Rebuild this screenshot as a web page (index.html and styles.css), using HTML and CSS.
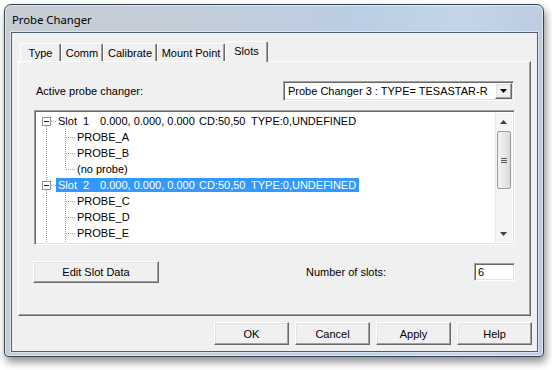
FILE: index.html
```html
<!DOCTYPE html>
<html>
<head>
<meta charset="utf-8">
<link rel="stylesheet" href="styles.css">
</head>
<body>
<div class="window">
  <div class="titlebar"><span class="title">Probe Changer</span></div>
  <div class="client">
    <div class="tabs">
      <div class="tab w-type">Type</div>
      <div class="tab w-comm">Comm</div>
      <div class="tab w-cal">Calibrate</div>
      <div class="tab w-mount">Mount Point</div>
      <div class="tab active w-slots">Slots</div>
    </div>
    <div class="panel">
      <div class="row-top">
        <span class="label">Active probe changer:</span>
        <div class="combo sunken">
          <span class="combo-text">Probe Changer 3 : TYPE= TESASTAR-R</span>
          <span class="combo-btn raised"><svg width="7" height="4" viewBox="0 0 7 4"><path d="M0 0H7L3.5 4Z" fill="#000"/></svg></span>
        </div>
      </div>
      <div class="tree sunken">
        <div class="tree-rows">
          <div class="trow">
            <svg class="gut-slot" width="19" height="16"><path class="dot" d="M9.5 13V16M14 8.5H19"/><rect class="box" x="5.5" y="4.5" width="8" height="8"/><path class="minus" d="M7 8.5H12"/></svg>
            <span class="tlabel slot"><span class="s1">Slot</span><span class="s2">1</span><span class="s3">0.000, 0.000, 0.000</span><span class="s4">CD:50,50</span><span>TYPE:0,UNDEFINED</span></span>
          </div>
          <div class="trow">
            <svg width="40" height="16"><path class="dot" d="M9.5 0V16M28.5 0V16M29 8.5H38"/></svg>
            <span class="tlabel">PROBE_A</span>
          </div>
          <div class="trow">
            <svg width="40" height="16"><path class="dot" d="M9.5 0V16M28.5 0V16M29 8.5H38"/></svg>
            <span class="tlabel">PROBE_B</span>
          </div>
          <div class="trow">
            <svg width="40" height="16"><path class="dot" d="M9.5 0V16M28.5 0V8.5M29 8.5H38"/></svg>
            <span class="tlabel">(no probe)</span>
          </div>
          <div class="trow">
            <svg width="19" height="16"><path class="dot" d="M9.5 0V4M9.5 13V16M14 8.5H19"/><rect class="box" x="5.5" y="4.5" width="8" height="8"/><path class="minus" d="M7 8.5H12"/></svg>
            <span class="tlabel slot selected"><span class="s1">Slot</span><span class="s2">2</span><span class="s3">0.000, 0.000, 0.000</span><span class="s4">CD:50,50</span><span>TYPE:0,UNDEFINED</span></span>
          </div>
          <div class="trow">
            <svg width="40" height="16"><path class="dot" d="M9.5 0V16M28.5 0V16M29 8.5H38"/></svg>
            <span class="tlabel">PROBE_C</span>
          </div>
          <div class="trow">
            <svg width="40" height="16"><path class="dot" d="M9.5 0V16M28.5 0V16M29 8.5H38"/></svg>
            <span class="tlabel">PROBE_D</span>
          </div>
          <div class="trow">
            <svg width="40" height="16"><path class="dot" d="M9.5 0V16M28.5 0V16M29 8.5H38"/></svg>
            <span class="tlabel">PROBE_E</span>
          </div>
          <div class="trow">
            <svg width="40" height="16"><path class="dot" d="M9.5 0V16M28.5 0V8.5M29 8.5H38"/></svg>
            <span class="tlabel">(no probe)</span>
          </div>
        </div>
        <div class="scrollbar">
          <div class="sb-arrow"><svg width="7" height="4" viewBox="0 0 7 4"><path d="M0 4H7L3.5 0Z" fill="#404040"/></svg></div>
          <div class="sb-track">
            <div class="sb-thumb"><span class="grip"></span><span class="grip"></span><span class="grip"></span></div>
          </div>
          <div class="sb-arrow"><svg width="7" height="4" viewBox="0 0 7 4"><path d="M0 0H7L3.5 4Z" fill="#404040"/></svg></div>
        </div>
      </div>
      <div class="row-bottom">
        <div class="btn raised btn-edit">Edit Slot Data</div>
        <span class="label num-label">Number of slots:</span>
        <div class="num-input sunken">6</div>
      </div>
    </div>
    <div class="buttons">
      <div class="btn raised">OK</div>
      <div class="btn raised">Cancel</div>
      <div class="btn raised">Apply</div>
      <div class="btn raised">Help</div>
    </div>
  </div>
</div>
</body>
</html>
```

FILE: styles.css
```css
html, body {
  margin: 0;
  padding: 0;
  background: #ffffff;
}
body {
  width: 552px;
  height: 370px;
  overflow: hidden;
  font-family: "Liberation Sans", Arial, sans-serif;
  font-size: 11px;
  color: #000;
}
.window {
  margin: 4px 0 0 4px;
  width: 540px;
  height: 353px;
  box-sizing: border-box;
  border: 1px solid #32414f;
  border-radius: 7px 7px 4px 4px;
  background: linear-gradient(to right, #c7ccd2 0%, #c3cdd9 35%, #bccee3 65%, #c4d5e8 85%, #bccde2 100%);
  box-shadow: inset 0 0 0 1px rgba(255,255,255,0.55), 2px 5px 9px rgba(0,0,0,0.45);
  display: flex;
  flex-direction: column;
}
.titlebar {
  height: 27px;
  display: flex;
  align-items: center;
  padding-left: 7px;
}
.title {
  font-family: "Noto Sans", "Open Sans", sans-serif;
  font-size: 11.3px;
  color: #000;
  margin-top: 1px;
}
.client {
  flex: 1;
  margin: 0 5px 4px 6px;
  border: 1px solid #4f5f72;
  box-shadow: 0 0 0 1px rgba(255,255,255,0.45);
  background: #f0f0f0;
  padding: 8px 0 0 6px;
  display: flex;
  flex-direction: column;
}
.tabs {
  display: flex;
  align-items: flex-end;
  height: 20px;
  margin-left: 2px;
}
.tab {
  height: 18px;
  box-sizing: border-box;
  border-style: solid;
  border-width: 1px 1px 0 1px;
  border-color: #ffffff #696969 transparent #ffffff;
  border-radius: 2px 2px 0 0;
  box-shadow: inset -1px 0 0 #a0a0a0;
  display: flex;
  align-items: center;
  justify-content: center;
  padding-top: 1px;
}
.tab.active {
  height: 21px;
  margin-bottom: -1px;
  position: relative;
  z-index: 1;
  background: #f0f0f0;
  padding-top: 0;
  padding-bottom: 3px;
}
.w-type { width: 41px; }
.w-comm { width: 42px; }
.w-cal { width: 54px; }
.w-mount { width: 68px; }
.w-slots { width: 43px; }
.panel {
  width: 513px;
  height: 255px;
  box-sizing: border-box;
  border-style: solid;
  border-width: 1px;
  border-color: #ffffff #696969 #696969 #ffffff;
  box-shadow: inset -1px -1px 0 #a0a0a0;
  padding: 19px 15px 0 15px;
  display: flex;
  flex-direction: column;
}
.sunken {
  box-sizing: border-box;
  border-style: solid;
  border-width: 1px;
  border-color: #a0a0a0 #ffffff #ffffff #a0a0a0;
  box-shadow: inset 1px 1px 0 #696969, inset -1px -1px 0 #e3e3e3;
  background: #ffffff;
}
.raised {
  box-sizing: border-box;
  border-style: solid;
  border-width: 1px;
  border-color: #ffffff #696969 #696969 #ffffff;
  box-shadow: inset -1px -1px 0 #a0a0a0, inset 1px 1px 0 #e3e3e3;
  background: #f0f0f0;
}
.row-top {
  height: 20px;
  display: flex;
  align-items: center;
  justify-content: space-between;
}
.label {
  padding-left: 2px;
}
.combo {
  width: 231px;
  height: 20px;
  margin-right: 1px;
  display: flex;
  align-items: center;
  padding: 1px 1px 1px 4px;
}
.combo-text {
  flex: 1;
}
.combo-btn {
  width: 17px;
  height: 16px;
  display: flex;
  align-items: center;
  justify-content: center;
}
.tree {
  margin-top: 9px;
  height: 135px;
  padding: 2px;
  display: flex;
}
.tree-rows {
  flex: 1;
  overflow: hidden;
  background: #fff;
}
.trow {
  height: 16px;
  display: flex;
  align-items: center;
  white-space: nowrap;
}
.trow svg {
  flex: none;
  display: block;
}
.dot {
  fill: none;
  stroke: #a0a0a0;
  stroke-width: 1;
  stroke-dasharray: 1 1;
}
.box {
  fill: #ffffff;
  stroke: #919191;
  stroke-width: 1;
}
.minus {
  stroke: #202020;
  stroke-width: 1;
}
.tlabel {
  height: 14px;
  line-height: 14px;
  padding: 0 2px 0 0;
}
.tlabel.slot {
  padding: 0 3px 0 2px;
  display: flex;
}
.tlabel.selected {
  background: #3399ff;
  color: #ffffff;
}
.s1 { width: 25px; }
.s2 { width: 17px; }
.s3 { width: 99px; }
.s4 { width: 52px; }
.scrollbar {
  width: 17px;
  flex: none;
  display: flex;
  flex-direction: column;
  background: #f4f4f4;
  box-shadow: inset 1px 0 0 #e6e6e6;
}
.sb-arrow {
  height: 17px;
  display: flex;
  align-items: center;
  justify-content: center;
}
.sb-track {
  flex: 1;
  padding: 1px 1px 0 2px;
}
.sb-thumb {
  height: 58px;
  box-sizing: border-box;
  border: 1px solid #9c9c9c;
  border-radius: 2px;
  background: linear-gradient(to right, #f3f3f3, #e6e6e6 60%, #d9d9d9);
  display: flex;
  flex-direction: column;
  align-items: center;
  justify-content: center;
  gap: 1px;
}
.grip {
  width: 6px;
  height: 1px;
  background: #5a5a5a;
}
.row-bottom {
  margin-top: 16px;
  height: 22px;
  display: flex;
  align-items: center;
}
.btn {
  display: flex;
  align-items: center;
  justify-content: center;
}
.btn-edit {
  width: 126px;
  height: 22px;
  margin-left: -1px;
}
.num-label {
  margin-left: 145px;
}
.num-input {
  width: 41px;
  height: 18px;
  margin-left: auto;
  padding: 1px 0 0 3px;
  line-height: 15px;
}
.buttons {
  margin-top: 6px;
  margin-right: 5px;
  display: flex;
  justify-content: flex-end;
  gap: 6px;
}
.buttons .btn {
  width: 75px;
  height: 23px;
}
```
